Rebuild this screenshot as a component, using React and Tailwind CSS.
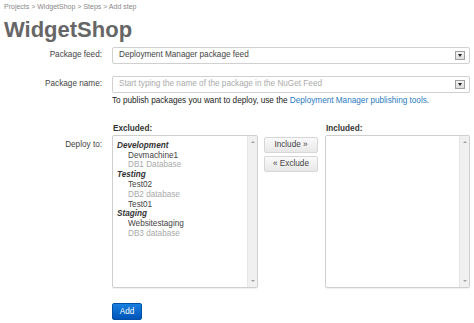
import { Fragment } from 'react';

const font = { fontFamily: '"Liberation Sans", Arial, sans-serif' };

const groups = [
  { name: 'Development', items: [['Devmachine1', true], ['DB1 Database', false]] },
  { name: 'Testing', items: [['Test02', true], ['DB2 database', false], ['Test01', true]] },
  { name: 'Staging', items: [['Websitestaging', true], ['DB3 database', false]] },
];

function DropArrow() {
  return (
    <div className="w-[10px] h-[9px] border border-[#a0a0a0] bg-gradient-to-b from-[#f4f4f4] to-[#dcdcdc] flex items-center justify-center">
      <div className="w-0 h-0 border-l-[2.5px] border-r-[2.5px] border-t-[3px] border-l-transparent border-r-transparent border-t-[#222]" />
    </div>
  );
}

function Scrollbar() {
  return (
    <div className="w-[10px] bg-[#f0f0f0] border-l border-[#e6e6e6] flex flex-col justify-between items-center py-[5px]">
      <div className="w-0 h-0 border-l-[2px] border-r-[2px] border-b-[2px] border-l-transparent border-r-transparent border-b-[#a0a0a0]" />
      <div className="w-0 h-0 border-l-[2px] border-r-[2px] border-t-[2px] border-l-transparent border-r-transparent border-t-[#a0a0a0]" />
    </div>
  );
}

function ListBox({ children }) {
  return (
    <div className="h-[153px] border border-[#cfcfcf] rounded-[2px] bg-white flex shadow-[0_1px_1px_rgba(0,0,0,0.06)]">
      <div className="flex-1 pt-[5px] pl-[4px] text-[8.2px] leading-[9.8px]">{children}</div>
      <Scrollbar />
    </div>
  );
}

export default function App() {
  return (
    <div className="w-[474px] h-[323px] bg-white text-[#333] overflow-hidden" style={font}>
      <div className="pl-[4px] pt-[2px] text-[7px] text-[#888]">Projects &gt; WidgetShop &gt; Steps &gt; Add step</div>
      <h1 className="pl-[4px] mt-[4px] text-[22px] leading-[25px] font-bold text-[#666]">WidgetShop</h1>

      <div className="mt-[5px] flex items-center">
        <label className="w-[102px] text-right text-[8.2px] text-[#444]">Package feed:</label>
        <div className="ml-[10px] w-[358px] h-[17px] border border-[#d0d0d0] rounded-[2px] flex items-center justify-between pl-[6px] pr-[4px] text-[8.2px] text-[#444]">
          <span>Deployment Manager package feed</span>
          <DropArrow />
        </div>
      </div>

      <div className="mt-[12px] flex items-center">
        <label className="w-[102px] text-right text-[8.2px] text-[#444]">Package name:</label>
        <div className="ml-[10px] w-[358px] h-[17px] border border-[#d0d0d0] rounded-[2px] flex items-center justify-between pl-[6px] pr-[4px] text-[8.2px] text-[#aaa]">
          <span>Start typing the name of the package in the NuGet Feed</span>
          <DropArrow />
        </div>
      </div>
      <div className="ml-[112px] mt-[2px] text-[8.2px] text-[#222]">
        To publish packages you want to deploy, use the{' '}
        <span className="text-[#2a7ac0]">Deployment Manager publishing tools.</span>
      </div>

      <div className="mt-[16px] flex">
        <label className="w-[102px] text-right text-[8.2px] text-[#444] pt-[16px]">Deploy to:</label>
        <div className="ml-[10px] w-[146px]">
          <div className="pl-[1px] text-[8.2px] font-bold text-[#333] h-[12px]">Excluded:</div>
          <ListBox>
            {groups.map((g) => (
              <Fragment key={g.name}>
                <div className="font-bold italic text-[#333]">{g.name}</div>
                {g.items.map(([n, active]) => (
                  <div key={n} className={`pl-[11px] ${active ? 'text-[#444]' : 'text-[#aaa]'}`}>{n}</div>
                ))}
              </Fragment>
            ))}
          </ListBox>
        </div>
        <div className="ml-[6px] pt-[14px] flex flex-col gap-[3px]">
          <button className="w-[54px] h-[16px] border border-[#d6d6d6] rounded-[2px] bg-gradient-to-b from-[#fafafa] to-[#e8e8e8] text-[8.2px] text-[#444]">Include »</button>
          <button className="w-[54px] h-[16px] border border-[#d6d6d6] rounded-[2px] bg-gradient-to-b from-[#fafafa] to-[#e8e8e8] text-[8.2px] text-[#444]">« Exclude</button>
        </div>
        <div className="ml-[7px] w-[145px]">
          <div className="pl-[1px] text-[8.2px] font-bold text-[#333] h-[12px]">Included:</div>
          <ListBox />
        </div>
      </div>

      <div className="ml-[112px] mt-[9px]">
        <button className="w-[30px] h-[17px] rounded-[2px] bg-gradient-to-b from-[#1a80e0] to-[#0054b8] border border-[#0050a8] text-white text-[8.2px]">Add</button>
      </div>
    </div>
  );
}
